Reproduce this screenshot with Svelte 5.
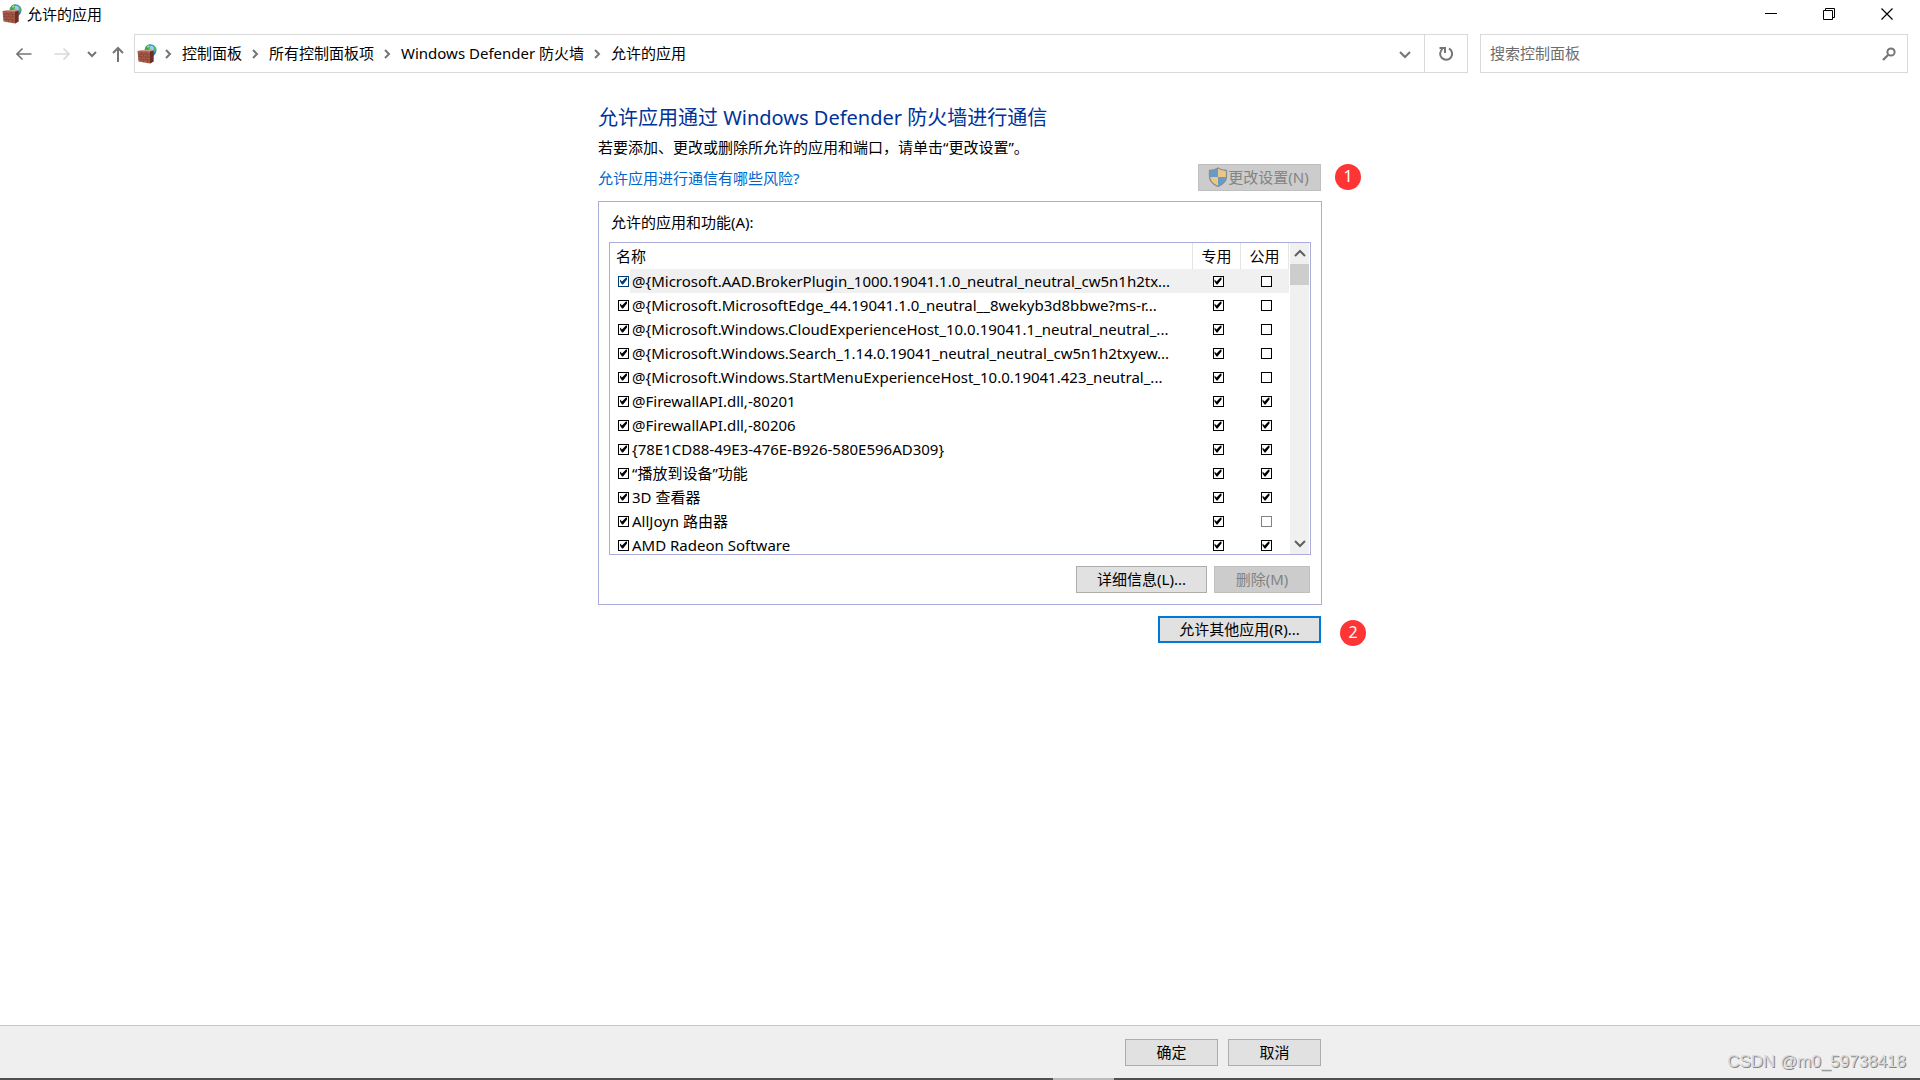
<script>
  const crumbs = ['控制面板', '所有控制面板项', 'Windows Defender 防火墙', '允许的应用'];

  let apps = $state([
    { name: '@{Microsoft.AAD.BrokerPlugin_1000.19041.1.0_neutral_neutral_cw5n1h2tx...', on: true, priv: true, pub: false, selected: true },
    { name: '@{Microsoft.MicrosoftEdge_44.19041.1.0_neutral__8wekyb3d8bbwe?ms-r...', on: true, priv: true, pub: false },
    { name: '@{Microsoft.Windows.CloudExperienceHost_10.0.19041.1_neutral_neutral_...', on: true, priv: true, pub: false },
    { name: '@{Microsoft.Windows.Search_1.14.0.19041_neutral_neutral_cw5n1h2txyew...', on: true, priv: true, pub: false },
    { name: '@{Microsoft.Windows.StartMenuExperienceHost_10.0.19041.423_neutral_...', on: true, priv: true, pub: false },
    { name: '@FirewallAPI.dll,-80201', on: true, priv: true, pub: true },
    { name: '@FirewallAPI.dll,-80206', on: true, priv: true, pub: true },
    { name: '{78E1CD88-49E3-476E-B926-580E596AD309}', on: true, priv: true, pub: true },
    { name: '“播放到设备”功能', on: true, priv: true, pub: true },
    { name: '3D 查看器', on: true, priv: true, pub: true },
    { name: 'AllJoyn 路由器', on: true, priv: true, pub: false, locked: true },
    { name: 'AMD Radeon Software', on: true, priv: true, pub: true }
  ]);
</script>

{#snippet firewallIcon()}
  <svg class="fw" viewBox="0 0 20 20" width="20" height="20" aria-hidden="true">
    <circle cx="13.500" cy="6.300" r="6" fill="#3f8fdc" />
    <circle cx="14" cy="5" r="3.200" fill="#8fd0f5" />
    <path d="M8 5C8.500 2 11 .3 13.500.4L12.500 2.500l.5 1.500-2 2.500H8z" fill="#3fae3c" />
    <path d="M10 2.500l2-1.300.5 1L11 4z" fill="#a4ea8c" />
    <path d="M16 1.200c2 .8 3.300 2.500 3.500 4.500L18 8l-1.500-2 .5-2z" fill="#4cb660" />
    <path d="M16 9l2.500-1-1.500 3.500-1 .5z" fill="#2d62b8" />
    <path d="M.5 7l13-1.500 3 1v11l-3.500 2L1.500 17.500z" fill="#a65a48" />
    <path d="M13 7l3.500-.5v11l-3.500 2z" fill="#6b2f26" />
    <path d="M.5 7l13-1.500 3 1L13 7.500z" fill="#cf9a88" />
    <path d="M1 10l12 .3M1 12.600l12 .5M1.300 15.200l11.700.8M4.500 7.500v2.500M9 7.500v2.700M6.500 10.200v2.500M3 10v2.500M10.500 10.500v2.500M4.500 12.800v2.700M9 13v2.800M6.500 15.600v2.600M10.500 16v2.800" stroke="#7c3b2e" stroke-width=".5" fill="none" />
  </svg>
{/snippet}

{#snippet chevron(cls, d)}
  <svg class={cls} viewBox="0 0 12 12" width="12" height="12" aria-hidden="true"><path {d} fill="none" stroke="currentColor" stroke-width="2" /></svg>
{/snippet}

<div class="window">
  <header class="titlebar">
    {@render firewallIcon()}
    <span class="title">允许的应用</span>
    <div class="winbtns">
      <button aria-label="最小化"><svg width="12" height="12" viewBox="0 0 12 12"><path d="M0 5.500h12" stroke="#000" /></svg></button>
      <button aria-label="还原"><svg width="12" height="12" viewBox="0 0 12 12" fill="none" stroke="#000"><path d="M.5 2.500h9v9h-9zM2.500 2.500v-2h9v9h-2" /></svg></button>
      <button aria-label="关闭"><svg width="12" height="12" viewBox="0 0 12 12"><path d="M.5.5l11 11M11.500.5l-11 11" stroke="#000" stroke-width="1.200" /></svg></button>
    </div>
  </header>

  <div class="toolbar">
    <nav class="history" aria-label="导航">
      <button aria-label="后退"><svg width="16" height="16" viewBox="0 0 16 16" fill="none" stroke="#757575" stroke-width="1.600"><path d="M1 8h14.500M6.500 2.500L1 8l5.500 5.500" /></svg></button>
      <button aria-label="前进" class="fwd"><svg width="16" height="16" viewBox="0 0 16 16" fill="none" stroke="#d9d9d9" stroke-width="1.600"><path d="M.5 8H15M9.500 2.500L15 8l-5.500 5.500" /></svg></button>
      <button aria-label="最近位置" class="recent">{@render chevron('', 'M2 4l4 4 4-4')}</button>
      <button aria-label="上移"><svg width="12" height="16" viewBox="0 0 12 16" fill="none" stroke="#757575" stroke-width="2"><path d="M6 16V2M1 7l5-5 5 5" /></svg></button>
    </nav>
    <div class="address">
      {@render firewallIcon()}
      {#each crumbs as crumb}
        {@render chevron('sep', 'M4 2l4 4-4 4')}
        <a href="#path">{crumb}</a>
      {/each}
      <button class="drop" aria-label="历史记录">{@render chevron('', 'M1 4l5 5 5-5')}</button>
      <button class="refresh" aria-label="刷新"><svg width="16" height="16" viewBox="0 0 16 16" fill="none" stroke="#757575" stroke-width="2"><path d="M11 2.500A6 6 0 1 1 4.500 3M1.500 2H7v5" /></svg></button>
    </div>
    <label class="search">
      <input type="text" placeholder="搜索控制面板" aria-label="搜索控制面板" />
      <svg width="14" height="14" viewBox="0 0 14 14" fill="none" stroke="#757575"><circle cx="9" cy="5" r="3.600" stroke-width="2" /><path d="M6.300 7.700L1 13" stroke-width="2.200" /></svg>
    </label>
  </div>

  <main>
    <h1>允许应用通过 Windows Defender 防火墙进行通信</h1>
    <p>若要添加、更改或删除所允许的应用和端口，请单击“更改设置”。</p>
    <div class="linkrow">
      <a href="#risks">允许应用进行通信有哪些风险?</a>
      <div class="anchor">
        <button class="btn change" disabled>
          <svg width="20" height="20" viewBox="0 0 20 20" aria-hidden="true">
            <path d="M10 1C7.500 2.600 4.500 3.400 1.500 3.500v6c0 4.500 4 8 8.500 10z" fill="#679bcb" />
            <path d="M10 1c2.500 1.600 5.500 2.400 8.500 2.500v6c0 4.500-4 8-8.500 10z" fill="#e9c883" />
            <path d="M1.500 10H10v9.500C5.500 17.500 1.700 14.200 1.500 10z" fill="#e9c883" />
            <path d="M18.500 10H10v9.500c4.500-2 8.300-5.300 8.500-9.500z" fill="#679bcb" />
            <path d="M10 1C7.500 2.600 4.500 3.400 1.500 3.500v6c0 4.500 4 8 8.500 10 4.500-2 8.500-5.500 8.500-10v-6C15.500 3.400 12.500 2.600 10 1z" fill="none" stroke="#8b8e90" stroke-width="1.300" />
          </svg>更改设置(N)</button>
        <span class="badge one">1</span>
      </div>
    </div>

    <section class="group">
      <h2>允许的应用和功能(A):</h2>
      <div class="list">
        <table>
          <colgroup><col class="c-check" /><col /><col class="c-net" /><col class="c-net" /></colgroup>
          <thead>
            <tr><th colspan="2" class="name">名称</th><th>专用</th><th>公用</th></tr>
          </thead>
          <tbody>
            {#each apps as app, i}
              <tr class:selected={app.selected}>
                <td class="check"><input type="checkbox" id={'app' + i} bind:checked={app.on} /></td>
                <td class="name"><label for={'app' + i}>{app.name}</label></td>
                <td><input type="checkbox" aria-label={'专用 ' + app.name} bind:checked={app.priv} /></td>
                <td><input type="checkbox" aria-label={'公用 ' + app.name} bind:checked={app.pub} disabled={app.locked} /></td>
              </tr>
            {/each}
          </tbody>
        </table>
        <div class="scrollbar">
          <button aria-label="向上滚动">{@render chevron('', 'M1 8l5-5 5 5')}</button>
          <div class="thumb"></div>
          <button class="down" aria-label="向下滚动">{@render chevron('', 'M1 3l5 5 5-5')}</button>
        </div>
      </div>
      <div class="actions">
        <button class="btn details">详细信息(L)...</button>
        <button class="btn remove" disabled>删除(M)</button>
      </div>
    </section>

    <div class="other">
      <div class="anchor">
        <button class="btn primary">允许其他应用(R)...</button>
        <span class="badge two">2</span>
      </div>
    </div>
  </main>

  <footer>
    <div class="confirm">
      <button class="btn">确定</button>
      <button class="btn">取消</button>
    </div>
    <span class="watermark">CSDN @m0_59738418</span>
  </footer>
  <div class="taskbar"><span></span></div>
</div>

<style>
  :global(body) { background: #fff; }
  .window, button, input { font-family: "Noto Sans", "Noto Sans CJK SC", sans-serif; font-size: 15px; }
  .window { min-height: 100vh; display: flex; flex-direction: column; line-height: 20px; color: #000; }
  .window * { box-sizing: border-box; }
  button { border: 0; padding: 0; background: none; color: inherit; display: flex; align-items: center; justify-content: center; line-height: 20px; }
  a { text-decoration: none; color: inherit; }
  svg { display: block; flex: none; }

  .titlebar { display: flex; align-items: center; height: 28px; padding: 0 4px 0 2px; gap: 5px; }
  .winbtns { margin-left: auto; display: flex; }
  .winbtns button { width: 58px; height: 28px; }

  .toolbar { display: flex; margin-top: 6px; padding-right: 12px; height: 39px; }
  .history { display: flex; align-items: center; width: 134px; padding-left: 16px; color: #757575; }
  .fwd { margin-left: 22px; }
  .recent { margin: 0 14px 0 16px; }
  .address { flex: 1; min-width: 0; display: flex; align-items: center; border: 1px solid #d9d9d9; padding-left: 2px; white-space: nowrap; }
  .address a { padding-bottom: 2px; }
  .address :global(.sep) { margin: 0 8px 0 5px; color: #757575; }
  .address a + :global(.sep) { margin-left: 7px; }
  .drop { margin-left: auto; width: 38px; height: 37px; color: #757575; }
  .refresh { width: 43px; height: 37px; border-left: 1px solid #d9d9d9; }
  .search { width: 428px; margin-left: 12px; display: flex; align-items: center; border: 1px solid #d9d9d9; padding: 0 11px 0 9px; }
  .search input { flex: 1; min-width: 0; border: 0; outline: 0; padding: 0 0 2px; background: none; }
  .search input::placeholder { color: #6d6d6d; opacity: 1; }

  main { flex: 1; width: 724px; max-width: 100%; margin: 0 auto; padding-top: 31px; }
  h1 { margin: 0; font-size: 20px; line-height: 28px; font-weight: 400; color: #003399; white-space: nowrap; }
  p { margin: 5px 0 7px; line-height: 20px; white-space: nowrap; }
  .linkrow { display: flex; justify-content: space-between; align-items: center; height: 27px; margin: 7px 1px 10px 0; }
  .linkrow a { color: #0066cc; padding-top: 1px; }
  .anchor { position: relative; }
  .btn { height: 27px; padding-bottom: 2px; border: 1px solid #adadad; background: #e1e1e1; white-space: nowrap; }
  .btn:disabled { background: #ccc; border-color: #bfbfbf; color: #838383; }
  .change { width: 123px; padding-right: 2px; }
  .badge { position: absolute; left: 100%; top: 0; width: 26px; height: 26px; border-radius: 50%; background: #fd3535; color: #fff; font-size: 16px; line-height: 24px; text-align: center; }
  .one { margin-left: 14px; }
  .two { margin: 4px 0 0 19px; }

  .group { border: 1px solid #acacdc; padding: 10px; height: 404px; }
  h2 { margin: 0 0 10px 2px; font-size: 15px; line-height: 20px; font-weight: 400; }
  .list { display: flex; height: 313px; border: 1px solid #acacdc; overflow: hidden; }
  table { flex: 1; min-width: 0; table-layout: fixed; border-collapse: collapse; align-self: flex-start; }
  .c-check { width: 20px; }
  .c-net { width: 48px; }
  th { height: 26px; padding: 0; font-weight: 400; border-right: 1px solid #e5e5e5; text-align: center; }
  th.name { text-align: left; padding-left: 6px; }
  td { height: 24px; padding: 0; text-align: center; }
  td.name { text-align: left; white-space: nowrap; overflow: hidden; padding-left: 2px; }
  td.name label { display: block; line-height: 24px; height: 24px; }
  .selected td:not(.check) { background: #f0f0f0; }
  .selected .check input { border-color: #003c74; color: #003c74; }
  td input { appearance: none; display: block; width: 11px; height: 11px; margin: 0 0 0 20px; border: 1px solid #000; background: #fff; color: #000; }
  .check input { margin-left: 8px; }
  td input:checked::before { content: ''; display: block; width: 9px; height: 9px; background: currentColor; clip-path: polygon(1px 3px, 3px 5px, 7px 1px, 8px 1px, 8px 3px, 4px 8px, 3px 8px, 1px 5px); }
  td input:disabled { border-color: #838383; }
  .scrollbar { width: 21px; background: #f0f0f0; display: flex; flex-direction: column; color: #606060; border: solid #fff; border-width: 0 1px; }
  .scrollbar button { height: 21px; }
  .thumb { height: 21px; background: #cdcdcd; }
  .scrollbar .down { margin-top: auto; }
  .actions { display: flex; justify-content: flex-end; gap: 7px; margin: 11px 1px 0 0; }
  .details { width: 131px; }
  .remove { width: 96px; }
  .other { display: flex; justify-content: flex-end; margin: 11px 1px 0 0; }
  .primary { width: 163px; border: 2px solid #0078d7; }

  footer { position: relative; height: 53px; background: #efefef; border-top: 1px solid #c8c8c8; padding-top: 13px; }
  .confirm { width: 724px; max-width: 100%; margin: 0 auto; padding-right: 1px; display: flex; justify-content: flex-end; gap: 10px; }
  .confirm .btn { width: 93px; }
  .watermark { position: absolute; right: 14px; bottom: 6px; font-family: "Liberation Sans", sans-serif; font-size: 17px; color: #d8d8d8; text-shadow: 1px 1px 0 #868686; }
  .taskbar { height: 2px; background: #505050; display: flex; justify-content: center; }
  .taskbar span { width: 61px; margin-left: 247px; background: #bababa; }
</style>
